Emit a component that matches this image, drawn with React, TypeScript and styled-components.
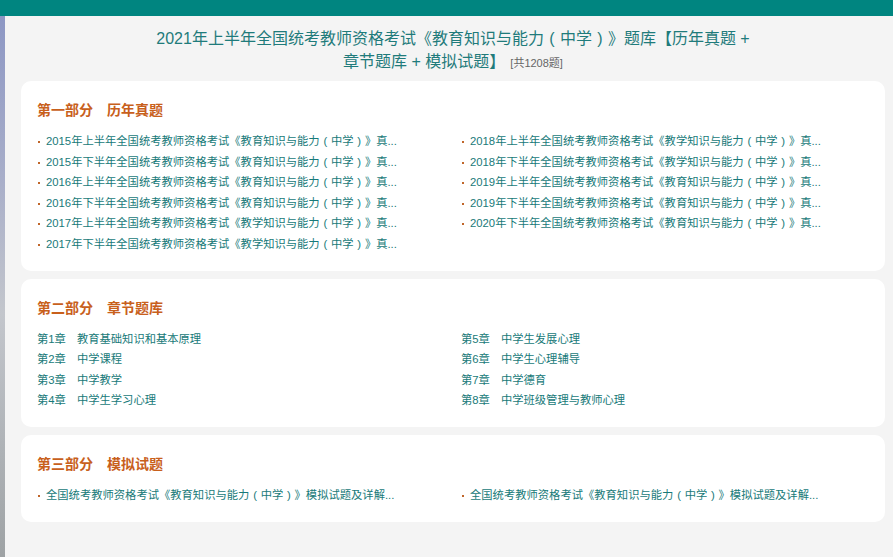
import styled, { createGlobalStyle } from "styled-components";
import { Fragment } from "react";

const GlobalStyle = createGlobalStyle`
  html, body {
    margin: 0;
    padding: 0;
    background: #f4f4f4;
    font-family: "Liberation Sans", "Noto Sans CJK SC", sans-serif;
  }
`;

const TopBar = styled.div`
  height: 16px;
  background: #008580;
`;

const Body = styled.div`
  display: flex;
  min-height: 541px;
`;

const SideStrip = styled.div`
  width: 5px;
  flex-shrink: 0;
  background: linear-gradient(180deg, #8d97c4 0%, #a8aec9 30%, #c3c6cc 55%, #aeb2b6 80%, #9ea2a4 100%);
`;

const Main = styled.div`
  flex: 1;
  padding: 0 8px 20px 16px;
`;

const Title = styled.h1`
  margin: 0 0 8px;
  padding: 11px 0 0;
  text-align: center;
  font-size: 16px;
  font-weight: normal;
  line-height: 23px;
  color: #1f7b7b;
`;

const Count = styled.span`
  font-size: 11px;
  line-height: 1;
  color: #666;
  margin-left: 5px;
`;

// centred full-width bracket, like the original page's font draws it
const Paren = styled.span`
  display: inline-block;
  width: 1em;
  text-align: center;
`;

const Card = styled.section<{ $bottom?: number }>`
  background: #fff;
  border-radius: 10px;
  padding: 18px 0 ${(p) => p.$bottom ?? 16}px 16px;
  margin-bottom: 8px;
`;

const Heading = styled.h2`
  margin: 0 0 10px;
  font-size: 14px;
  font-weight: bold;
  line-height: 22px;
  color: #c8601c;
`;

const List = styled.ul<{ $rows: number }>`
  margin: 0;
  padding: 0;
  list-style: none;
  display: grid;
  grid-template-columns: 424px 424px;
  grid-auto-flow: column;
  grid-template-rows: ${(p) => `repeat(${p.$rows}, 20.6px)`};
`;

const Item = styled.li<{ $dot?: boolean }>`
  display: flex;
  align-items: center;
  white-space: nowrap;
  font-size: 11.3px;
  line-height: 20.6px;
  color: #187a79;
  padding-left: ${(p) => (p.$dot ? "9px" : "0")};
  position: relative;

  &::before {
    content: "";
    display: ${(p) => (p.$dot ? "block" : "none")};
    position: absolute;
    left: 1px;
    top: 10px;
    width: 2px;
    height: 2px;
    background: #c0662a;
  }
`;

const Gap = styled.span`
  display: inline-block;
  width: 11px;
`;

const withParens = (text: string) =>
  text.split(/([（）])/).map((part, i) =>
    part === "（" ? (
      <Paren key={i}>(</Paren>
    ) : part === "）" ? (
      <Paren key={i}>)</Paren>
    ) : (
      <Fragment key={i}>{part}</Fragment>
    )
  );

const past = [
  "2015年上半年全国统考教师资格考试《教育知识与能力（中学）》真...",
  "2015年下半年全国统考教师资格考试《教育知识与能力（中学）》真...",
  "2016年上半年全国统考教师资格考试《教育知识与能力（中学）》真...",
  "2016年下半年全国统考教师资格考试《教育知识与能力（中学）》真...",
  "2017年上半年全国统考教师资格考试《教学知识与能力（中学）》真...",
  "2017年下半年全国统考教师资格考试《教学知识与能力（中学）》真...",
  "2018年上半年全国统考教师资格考试《教学知识与能力（中学）》真...",
  "2018年下半年全国统考教师资格考试《教学知识与能力（中学）》真...",
  "2019年上半年全国统考教师资格考试《教育知识与能力（中学）》真...",
  "2019年下半年全国统考教师资格考试《教育知识与能力（中学）》真...",
  "2020年下半年全国统考教师资格考试《教育知识与能力（中学）》真...",
];

const chapters = [
  ["第1章", "教育基础知识和基本原理"],
  ["第2章", "中学课程"],
  ["第3章", "中学教学"],
  ["第4章", "中学生学习心理"],
  ["第5章", "中学生发展心理"],
  ["第6章", "中学生心理辅导"],
  ["第7章", "中学德育"],
  ["第8章", "中学班级管理与教师心理"],
];

const mock = [
  "全国统考教师资格考试《教育知识与能力（中学）》模拟试题及详解...",
  "全国统考教师资格考试《教育知识与能力（中学）》模拟试题及详解...",
];

export default function App() {
  return (
    <>
      <GlobalStyle />
      <TopBar />
      <Body>
        <SideStrip />
        <Main>
          <Title>
            {withParens("2021年上半年全国统考教师资格考试《教育知识与能力（中学）》题库【历年真题 +")}
            <br />
            章节题库 + 模拟试题】
            <Count>[共1208题]</Count>
          </Title>

          <Card $bottom={16}>
            <Heading>第一部分　历年真题</Heading>
            <List $rows={6}>
              {past.map((t, i) => (
                <Item $dot key={i}>
                  {withParens(t)}
                </Item>
              ))}
            </List>
          </Card>

          <Card $bottom={16}>
            <Heading>第二部分　章节题库</Heading>
            <List $rows={4}>
              {chapters.map(([n, t]) => (
                <Item key={n}>
                  {n}
                  <Gap />
                  {t}
                </Item>
              ))}
            </List>
          </Card>

          <Card $bottom={16}>
            <Heading>第三部分　模拟试题</Heading>
            <List $rows={1}>
              {mock.map((t, i) => (
                <Item $dot key={i}>
                  {withParens(t)}
                </Item>
              ))}
            </List>
          </Card>
        </Main>
      </Body>
    </>
  );
}
